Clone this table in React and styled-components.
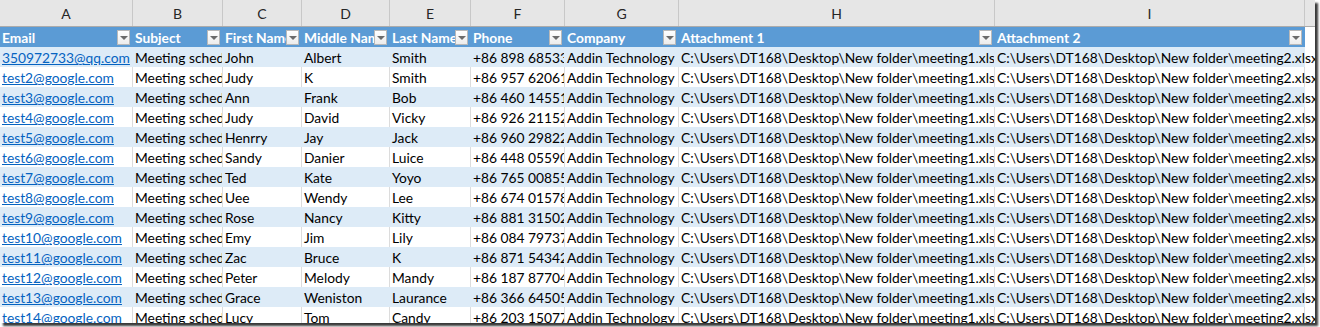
import React from 'react';
import styled, { createGlobalStyle } from 'styled-components';

const GlobalStyle = createGlobalStyle`
  html, body {
    margin: 0;
    padding: 0;
    background: #ffffff;
  }
`;

const COLS = '133px 90px 79px 88px 81px 94px 114px 316px 310px 1fr';

const Frame = styled.div`
  width: 1320px;
  height: 327px;
  overflow: hidden;
  background: #ffffff;
`;

const Sheet = styled.div`
  width: 1315px;
  height: 323px;
  overflow: hidden;
  background: #ffffff;
  box-shadow: 3px 3px 2px #3a3a3a;
  font-family: Lato, "Liberation Sans", sans-serif;
  font-size: 13.8px;
  color: #000000;
`;

const Row = styled.div`
  display: grid;
  grid-template-columns: ${COLS};
  height: 20px;
  box-sizing: border-box;
`;

const LetterRow = styled(Row)`
  height: 27px;
  background: #e6e6e6;
  border-bottom: 1px solid #ababab;
`;

const Letter = styled.div`
  display: flex;
  align-items: flex-end;
  justify-content: center;
  padding-bottom: 4px;
  box-sizing: border-box;
  border-right: 1px solid ${p => (p.$last ? 'transparent' : '#c8c8c8')};
  font-size: 14px;
  color: #262626;
`;

const HeadRow = styled(Row)`
  background: #5b9bd5;
`;

const HeadCell = styled.div`
  display: flex;
  align-items: center;
  min-width: 0;
  padding: 1px 3px 0 2px;
  box-sizing: border-box;
`;

const HeadLabel = styled.span`
  flex: 1;
  min-width: 0;
  overflow: hidden;
  white-space: nowrap;
  color: #ffffff;
  font-weight: bold;
`;

const FilterButton = styled.span`
  flex: none;
  width: 13px;
  height: 15px;
  box-sizing: border-box;
  border: 1px solid #b9b9b9;
  background: linear-gradient(#ffffff, #ececec);
  display: flex;
  align-items: center;
  justify-content: center;

  &::after {
    content: '';
    border-left: 4px solid transparent;
    border-right: 4px solid transparent;
    border-top: 4px solid #6b6b6b;
  }
`;

const DataRow = styled(Row)`
  border-bottom: 1px solid #9bc2e6;
`;

const Cell = styled.div`
  padding: 1px 0 0 2px;
  line-height: 19px;
  white-space: nowrap;
  overflow: ${p => (p.$spill ? 'visible' : 'hidden')};
  background: ${p => (p.$band ? '#ddebf7' : '#ffffff')};
  border-right: 1px solid ${p => (p.$band ? 'transparent' : '#dcdcdc')};
  position: ${p => (p.$spill ? 'relative' : 'static')};
  z-index: ${p => (p.$spill ? 1 : 'auto')};
`;

const Filler = styled.div`
  background: #ffffff;
`;

const Link = styled.span`
  color: #0563c1;
  text-decoration: underline;
`;

const letters = ['A', 'B', 'C', 'D', 'E', 'F', 'G', 'H', 'I'];
const headers = ['Email', 'Subject', 'First Name', 'Middle Name', 'Last Name', 'Phone', 'Company', 'Attachment 1', 'Attachment 2'];

const people = [
  ['350972733@qq.com', 'John', 'Albert', 'Smith', '+86 898 6853377'],
  ['test2@google.com', 'Judy', 'K', 'Smith', '+86 957 6206129'],
  ['test3@google.com', 'Ann', 'Frank', 'Bob', '+86 460 1455166'],
  ['test4@google.com', 'Judy', 'David', 'Vicky', '+86 926 2115266'],
  ['test5@google.com', 'Henrry', 'Jay', 'Jack', '+86 960 2982266'],
  ['test6@google.com', 'Sandy', 'Danier', 'Luice', '+86 448 0559066'],
  ['test7@google.com', 'Ted', 'Kate', 'Yoyo', '+86 765 0085506'],
  ['test8@google.com', 'Uee', 'Wendy', 'Lee', '+86 674 0157833'],
  ['test9@google.com', 'Rose', 'Nancy', 'Kitty', '+86 881 3150266'],
  ['test10@google.com', 'Emy', 'Jim', 'Lily', '+86 084 7973716'],
  ['test11@google.com', 'Zac', 'Bruce', 'K', '+86 871 5434277'],
  ['test12@google.com', 'Peter', 'Melody', 'Mandy', '+86 187 8770479'],
  ['test13@google.com', 'Grace', 'Weniston', 'Laurance', '+86 366 6450566'],
  ['test14@google.com', 'Lucy', 'Tom', 'Candy', '+86 203 1507749'],
];

export default function App() {
  return (
    <Frame>
      <GlobalStyle />
      <Sheet>
        <LetterRow>
          {letters.map(l => (
            <Letter key={l}>{l}</Letter>
          ))}
          <Letter $last />
        </LetterRow>
        <HeadRow>
          {headers.map(h => (
            <HeadCell key={h}>
              <HeadLabel>{h}</HeadLabel>
              <FilterButton />
            </HeadCell>
          ))}
          <Filler />
        </HeadRow>
        {people.map((p, i) => {
          const band = i % 2 === 0;
          return (
            <DataRow key={p[0]}>
              <Cell $band={band}><Link>{p[0]}</Link></Cell>
              <Cell $band={band}>Meeting schedule</Cell>
              <Cell $band={band}>{p[1]}</Cell>
              <Cell $band={band}>{p[2]}</Cell>
              <Cell $band={band}>{p[3]}</Cell>
              <Cell $band={band}>{p[4]}</Cell>
              <Cell $band={band}>Addin Technology</Cell>
              <Cell $band={band}>C:\Users\DT168\Desktop\New folder\meeting1.xlsx</Cell>
              <Cell $band={band} $spill>C:\Users\DT168\Desktop\New folder\meeting2.xlsx</Cell>
              <Filler />
            </DataRow>
          );
        })}
      </Sheet>
    </Frame>
  );
}
